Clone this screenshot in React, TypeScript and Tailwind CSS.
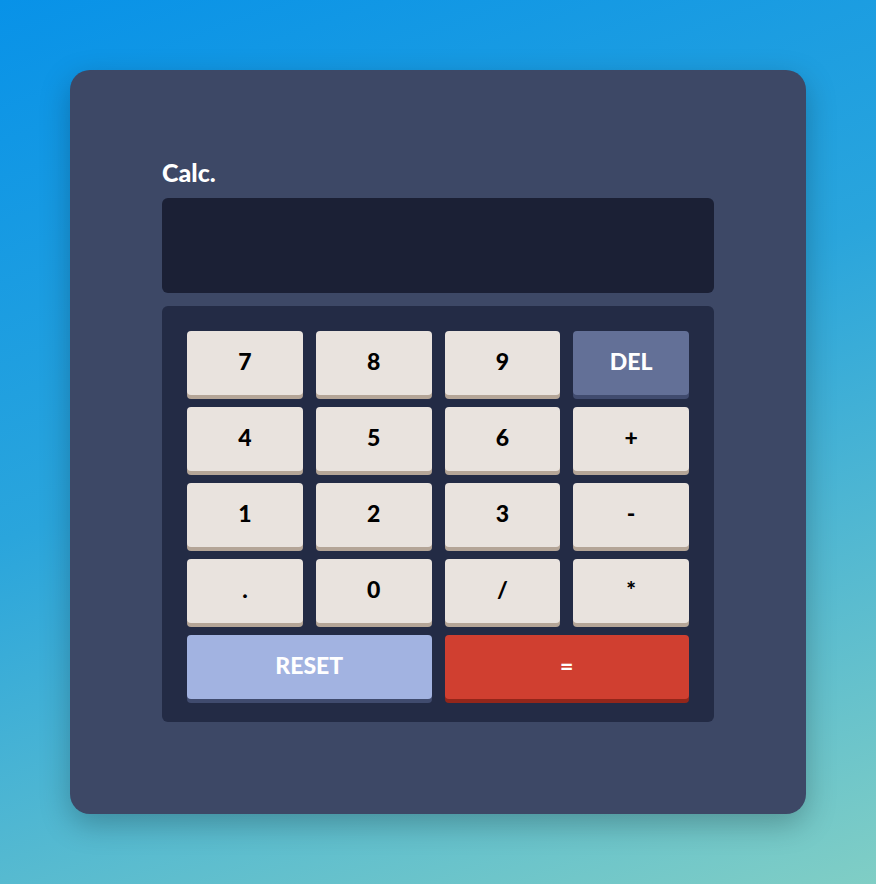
const keys: { label: string; kind?: 'del' | 'reset' | 'eq' }[] = [
  { label: '7' },
  { label: '8' },
  { label: '9' },
  { label: 'DEL', kind: 'del' },
  { label: '4' },
  { label: '5' },
  { label: '6' },
  { label: '+' },
  { label: '1' },
  { label: '2' },
  { label: '3' },
  { label: '-' },
  { label: '.' },
  { label: '0' },
  { label: '/' },
  { label: '*' },
  { label: 'RESET', kind: 'reset' },
  { label: '=', kind: 'eq' },
]

function keyClass(kind?: 'del' | 'reset' | 'eq'): string {
  switch (kind) {
    case 'del':
      return 'bg-[#637097] text-white shadow-[0_4px_0_#404b6e]'
    case 'reset':
      return 'col-span-2 bg-[#a2b3e1] text-white shadow-[0_4px_0_#404b6e]'
    case 'eq':
      return 'col-span-2 bg-[#d03f30] text-white shadow-[0_4px_0_#93261a]'
    default:
      return 'bg-[#e9e3de] text-black shadow-[0_4px_0_#b4a597]'
  }
}

export default function App(): React.JSX.Element {
  return (
    <div className="flex min-h-screen justify-center bg-[linear-gradient(160deg,#0892e8_0%,#2aa5dc_45%,#80cec5_100%)] pt-[70px] font-['Lato','Open_Sans',sans-serif]">
      <div className="h-[744px] w-[736px] rounded-[20px] bg-[#3d4866] px-[92px] pt-[88px] shadow-[0_10px_30px_rgba(0,0,0,0.25)]">
        <h1 className="mb-[12px] h-[28px] text-[25px] leading-[28px] font-black text-white">
          Calc.
        </h1>
        <div className="h-[95px] rounded-md bg-[#1b2035]" />
        <div className="mt-[13px] grid grid-cols-4 gap-x-[13px] gap-y-3 rounded-md bg-[#232b45] px-[25px] pt-[25px] pb-[23px]">
          {keys.map((k) => (
            <button
              key={k.label}
              type="button"
              className={`flex h-16 items-center justify-center rounded-[4px] pb-1 text-[23px] font-black ${keyClass(k.kind)}`}
            >
              {k.label}
            </button>
          ))}
        </div>
      </div>
    </div>
  )
}
